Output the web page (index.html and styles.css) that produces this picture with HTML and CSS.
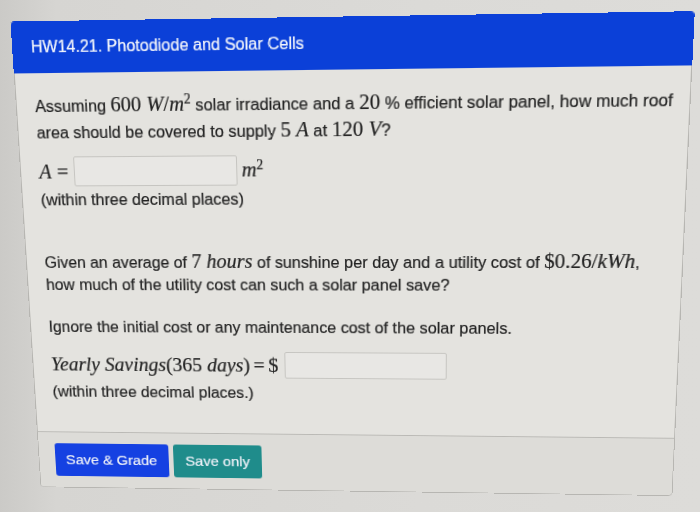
FILE: index.html
```html
<!DOCTYPE html>
<html lang="en">
<head>
<meta charset="utf-8">
<title>HW14.21. Photodiode and Solar Cells</title>
<link rel="stylesheet" href="styles.css">
</head>
<body>
<div class="card">
  <div class="card-header">HW14.21. Photodiode and Solar Cells</div>
  <div class="card-body">
    <p class="q-lead">Assuming <span class="m">600 <i>W</i>/<i>m</i><sup>2</sup></span> solar irradiance and a <span class="m">20</span> % efficient solar panel, how much roof<br>area should be covered to supply <span class="m">5 <i>A</i></span> at <span class="m">120 <i>V</i></span>?</p>
    <div class="answer-row first">
      <span class="m"><i>A</i><span class="rel rel-end">=</span></span>
      <input class="ans ans-a" type="text" aria-label="A">
      <span class="m unit"><i>m</i><sup>2</sup></span>
    </div>
    <p class="hint">(within three decimal places)</p>

    <p class="q-text">Given an average of <span class="m">7 <i>hours</i></span> of sunshine per day and a utility cost of <span class="m">$0.26/<i>kWh</i></span>,<br>how much of the utility cost can such a solar panel save?</p>
    <p class="q-note">Ignore the initial cost or any maintenance cost of the solar panels.</p>
    <div class="answer-row second">
      <span class="m"><i>Yearly Savings</i>(365 <i>days</i>)<span class="rel rel-tight">=</span>$</span>
      <input class="ans ans-b" type="text" aria-label="Yearly Savings">
    </div>
    <p class="hint hint-b">(within three decimal places.)</p>
  </div>
  <div class="card-footer">
    <button class="btn btn-grade" type="button">Save &amp; Grade</button>
    <button class="btn btn-save" type="button">Save only</button>
  </div>
</div>
</body>
</html>
```

FILE: styles.css
```css
* {
  box-sizing: border-box;
}

html,
body {
  margin: 0;
  height: 100%;
}

body {
  padding: 23px 0 0 19px;
  overflow: hidden;
  background: linear-gradient(90deg, #cbcac7 0%, #d6d5d2 8%, #dbdad7 60%, #dddcd9 100%);
  font-family: "Liberation Sans", Arial, sans-serif;
  font-size: 16.3px;
  color: #242424;
  -webkit-text-stroke: 0.2px currentColor;
}

.card {
  width: 658px;
  height: 481px;
  display: flex;
  flex-direction: column;
  background: #e4e3df;
  border: 1px solid #b7b6b2;
  border-radius: 4px;
  transform: perspective(1000px) rotateY(-3.5deg) rotateX(-9.6deg);
  transform-origin: 50% 50%;
}

.card-header {
  height: 50px;
  margin: -1px -1px 0 -1px;
  padding-left: 19px;
  display: flex;
  align-items: center;
  background: #0b40d8;
  color: #f4f6fb;
  font-size: 16px;
  border-radius: 4px 4px 0 0;
}

.card-body {
  flex: 1;
  padding: 20px 6px 0 18.5px;
}

p {
  margin: 0;
  white-space: nowrap;
}

.m {
  font-family: "Liberation Serif", "Times New Roman", serif;
  font-size: 1.26em;
  line-height: 1;
  white-space: nowrap;
}

.m i {
  font-style: italic;
}

.m sup {
  font-size: 0.66em;
  vertical-align: 0.55em;
  line-height: 0;
}

.rel {
  margin: 0 0.28em;
}

.rel-end {
  margin-right: 0;
}

.rel-tight {
  margin: 0 0.18em;
}

.q-lead {
  line-height: 25.5px;
}

.answer-row {
  display: flex;
  align-items: center;
}

.answer-row.first {
  margin-top: 11px;
  height: 30px;
}

.answer-row.second {
  margin-top: 14px;
  height: 28px;
}

.ans {
  margin: 0 0 0 6px;
  padding: 0;
  width: 165px;
  border: 1px solid #c6c5c1;
  border-radius: 2px;
  background: #e8e7e4;
  font: inherit;
}

.ans-a {
  height: 30px;
}

.ans-b {
  height: 28px;
}

.unit {
  margin-left: 4px;
  align-self: flex-start;
  margin-top: 4px;
}

.hint {
  margin-top: 2px;
  line-height: 23px;
}

.q-text {
  margin-top: 41px;
  line-height: 23px;
}

.q-note {
  margin-top: 21px;
  line-height: 23px;
}

.hint-b {
  margin-top: 4px;
}

.card-footer {
  height: 61px;
  padding: 12px 0 0 16.5px;
  display: flex;
  gap: 5.5px;
  align-items: flex-start;
  background: #dddcd8;
  border-top: 1px solid #bab9b5;
  border-radius: 0 0 4px 4px;
}

.btn {
  height: 36px;
  padding: 0;
  border: none;
  border-radius: 3px;
  font-family: "Liberation Sans", Arial, sans-serif;
  font-size: 15.5px;
  color: #eef1f8;
  white-space: nowrap;
  text-align: center;
}

.btn-grade {
  width: 121px;
  background: #1541e2;
}

.btn-save {
  width: 93px;
  background: #1f8c8b;
}
```
